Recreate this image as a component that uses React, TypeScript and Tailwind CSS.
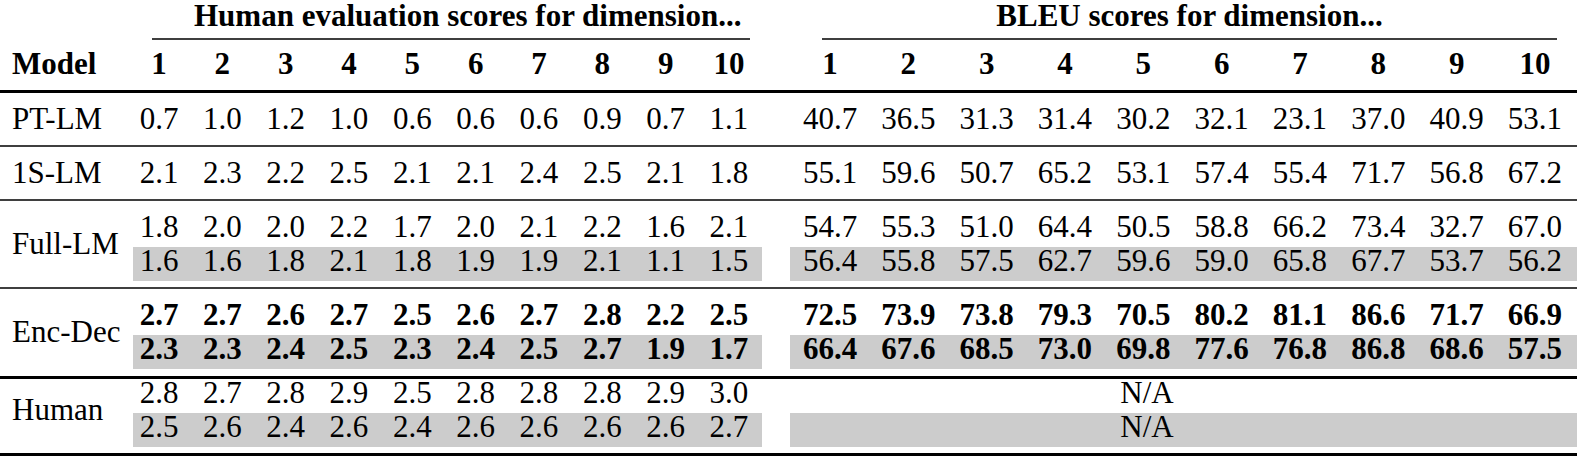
const human: Record<string, string[][]> = {
  "PT-LM": [["0.7", "1.0", "1.2", "1.0", "0.6", "0.6", "0.6", "0.9", "0.7", "1.1"]],
  "1S-LM": [["2.1", "2.3", "2.2", "2.5", "2.1", "2.1", "2.4", "2.5", "2.1", "1.8"]],
  "Full-LM": [
    ["1.8", "2.0", "2.0", "2.2", "1.7", "2.0", "2.1", "2.2", "1.6", "2.1"],
    ["1.6", "1.6", "1.8", "2.1", "1.8", "1.9", "1.9", "2.1", "1.1", "1.5"],
  ],
  "Enc-Dec": [
    ["2.7", "2.7", "2.6", "2.7", "2.5", "2.6", "2.7", "2.8", "2.2", "2.5"],
    ["2.3", "2.3", "2.4", "2.5", "2.3", "2.4", "2.5", "2.7", "1.9", "1.7"],
  ],
  Human: [
    ["2.8", "2.7", "2.8", "2.9", "2.5", "2.8", "2.8", "2.8", "2.9", "3.0"],
    ["2.5", "2.6", "2.4", "2.6", "2.4", "2.6", "2.6", "2.6", "2.6", "2.7"],
  ],
}

const bleu: Record<string, string[][]> = {
  "PT-LM": [["40.7", "36.5", "31.3", "31.4", "30.2", "32.1", "23.1", "37.0", "40.9", "53.1"]],
  "1S-LM": [["55.1", "59.6", "50.7", "65.2", "53.1", "57.4", "55.4", "71.7", "56.8", "67.2"]],
  "Full-LM": [
    ["54.7", "55.3", "51.0", "64.4", "50.5", "58.8", "66.2", "73.4", "32.7", "67.0"],
    ["56.4", "55.8", "57.5", "62.7", "59.6", "59.0", "65.8", "67.7", "53.7", "56.2"],
  ],
  "Enc-Dec": [
    ["72.5", "73.9", "73.8", "79.3", "70.5", "80.2", "81.1", "86.6", "71.7", "66.9"],
    ["66.4", "67.6", "68.5", "73.0", "69.8", "77.6", "76.8", "86.8", "68.6", "57.5"],
  ],
}

const dims = ["1", "2", "3", "4", "5", "6", "7", "8", "9", "10"]

// one table line: a 34px strut, text sits at the top with a 27px line box
function HumanCells({ values, shaded }: { values: string[]; shaded?: boolean }) {
  return (
    <div className={`h-[34px] w-[629px] ${shaded ? "bg-[#cccccc]" : ""}`}>
      <div className="grid grid-cols-[repeat(10,52px)] gap-x-[11.33px]">
        {values.map((v, i) => (
          <span key={i} className="text-center">
            {v}
          </span>
        ))}
      </div>
    </div>
  )
}

function BleuCells({ values, shaded }: { values?: string[]; shaded?: boolean }) {
  return (
    <div className={`ml-[28px] h-[34px] w-[787px] ${shaded ? "bg-[#cccccc]" : ""}`}>
      {values ? (
        <div className="grid grid-cols-[repeat(10,70px)] gap-x-[8.33px] pl-[5px]">
          {values.map((v, i) => (
            <span key={i} className="text-center">
              {v}
            </span>
          ))}
        </div>
      ) : (
        <div className="pr-[73px] text-center font-normal">N/A</div>
      )}
    </div>
  )
}

function Line({ values, bleuValues, shaded }: { values: string[]; bleuValues?: string[]; shaded?: boolean }) {
  return (
    <div className="flex">
      <HumanCells values={values} shaded={shaded} />
      <BleuCells values={bleuValues} shaded={shaded} />
    </div>
  )
}

function ThinRule() {
  return <div className="h-[2px] bg-[#3f3f3f]" />
}

function ThickRule() {
  return <div className="h-[3px] bg-black" />
}

function SingleRow({ name }: { name: string }) {
  return (
    <div className="flex h-[52px] pt-[12px]">
      <div className="w-[133px] pl-[12px]">{name}</div>
      <Line values={human[name][0]} bleuValues={bleu[name][0]} />
    </div>
  )
}

function DoubleRow({ name, height, top, bold }: { name: string; height: string; top: string; bold?: boolean }) {
  const h = human[name]
  const b = bleu[name]
  return (
    <div className={`flex ${height} ${top}`}>
      <div className="w-[133px] pl-[12px] pt-[17px]">{name}</div>
      <div className={bold ? "font-bold" : ""}>
        <Line values={h[0]} bleuValues={b?.[0]} />
        <Line values={h[1]} bleuValues={b?.[1]} shaded />
      </div>
    </div>
  )
}

export default function App() {
  return (
    <div className="h-[458px] w-[1578px] bg-white text-[31px] leading-[27px] text-black [font-family:'Liberation_Serif','Times_New_Roman',serif]">
      <div className="w-[1577px]">
        <div className="flex font-bold">
          <div className="ml-[152px] h-[40px] w-[598px] border-b-2 border-[#3f3f3f] pl-[42px] pt-[1px] leading-[30px]">
            Human evaluation scores for dimension...
          </div>
          <div className="ml-[72px] h-[40px] w-[735px] border-b-2 border-[#3f3f3f] pt-[1px] text-center leading-[30px]">
            BLEU scores for dimension...
          </div>
        </div>
        <div className="flex h-[50px] pt-[10px] font-bold">
          <div className="w-[133px] pl-[12px]">Model</div>
          <Line values={dims} bleuValues={dims} />
        </div>
        <ThickRule />
        <SingleRow name="PT-LM" />
        <ThinRule />
        <SingleRow name="1S-LM" />
        <ThinRule />
        <DoubleRow name="Full-LM" height="h-[86px]" top="pt-[12px]" />
        <ThinRule />
        <DoubleRow name="Enc-Dec" height="h-[87px]" top="pt-[12px]" bold />
        <ThickRule />
        <DoubleRow name="Human" height="h-[74px]" top="pt-0" />
        <ThickRule />
      </div>
    </div>
  )
}
